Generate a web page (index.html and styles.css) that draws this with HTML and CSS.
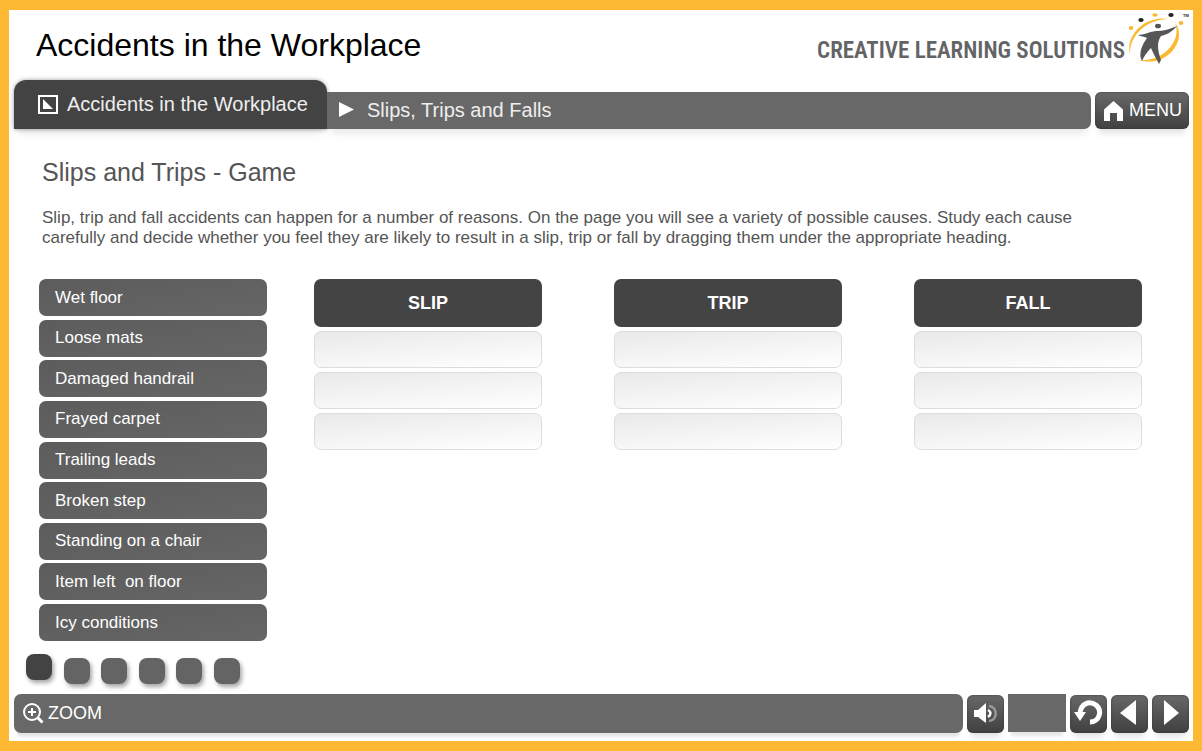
FILE: index.html
```html
<!DOCTYPE html>
<html lang="en">
<head>
    <meta charset="UTF-8">
    <meta name="viewport" content="width=device-width, initial-scale=1.0">
    <title>Accidents in the Workplace</title>
    <link rel="stylesheet" href="styles.css">
</head>
<body>
    <header class="header">
        <h1>Accidents in the Workplace</h1>
        <div class="logo">
            <span class="logo-text">CREATIVE LEARNING SOLUTIONS</span>
            <svg class="logo-mark" viewBox="0 0 62 54" aria-hidden="true">
                <path d="M1 42 C-4 22 16 2 40 6 C18 6 0 22 1 42Z" fill="#fbb92e"/>
                <path d="M46 10 C59 25 39 56 10 47 C36 49 53 26 46 10Z" fill="#fbb92e"/>
                <ellipse cx="29" cy="13" rx="3" ry="2.300" fill="#555657"/>
                <path d="M9 22 C15 22 19 19 27 18 C35 18 41 16 48 13 C43 19 37 22 32 23 C28 29 28 36 32 47 L30 51 C27 45 24 40 22 35 C18 39 15 43 13 48 C9 41 13 32 18 25 C15 23 12 24 9 22Z" fill="#555657"/>
                <ellipse cx="2" cy="15" rx="2.300" ry="2" fill="#fbb92e"/>
                <ellipse cx="12" cy="7" rx="2.700" ry="2" fill="#222"/>
                <ellipse cx="26" cy="2" rx="2.700" ry="1.800" fill="#fbb92e"/>
                <ellipse cx="42" cy="2" rx="2.700" ry="2" fill="#222"/>
                <ellipse cx="52" cy="10" rx="2.300" ry="2" fill="#fbb92e"/>
                <text x="54" y="4" class="tm">TM</text>
            </svg>
        </div>
    </header>

    <nav class="nav">
        <a class="tab" href="#">
            <svg width="20" height="20" viewBox="0 0 20 20" aria-hidden="true">
                <rect x="1" y="1" width="18" height="17" fill="none" stroke="#fff" stroke-width="2"/>
                <path d="M5 4V14H15Z" fill="#fff"/>
            </svg>
            Accidents in the Workplace
        </a>
        <div class="crumb">
            <svg width="15" height="17" viewBox="0 0 15 17" aria-hidden="true">
                <path d="M0 0L15 7.500L0 15Z" fill="#fff"/>
            </svg>
            Slips, Trips and Falls
        </div>
        <button class="btn menu" type="button">
            <svg width="19" height="20" viewBox="0 0 19 20" aria-hidden="true">
                <path d="M9.500 0L19 8.500V20H13V12H6V20H0V8.500Z" fill="#fff"/>
            </svg>
            MENU
        </button>
    </nav>

    <main class="content">
        <h2>Slips and Trips - Game</h2>
        <p>Slip, trip and fall accidents can happen for a number of reasons. On the page you will see a variety of possible causes. Study each cause carefully and decide whether you feel they are likely to result in a slip, trip or fall by dragging them under the appropriate heading.</p>

        <div class="game">
            <div class="causes">
                <button class="cause" type="button" draggable="true">Wet floor</button>
                <button class="cause" type="button" draggable="true">Loose mats</button>
                <button class="cause" type="button" draggable="true">Damaged handrail</button>
                <button class="cause" type="button" draggable="true">Frayed carpet</button>
                <button class="cause" type="button" draggable="true">Trailing leads</button>
                <button class="cause" type="button" draggable="true">Broken step</button>
                <button class="cause" type="button" draggable="true">Standing on a chair</button>
                <button class="cause" type="button" draggable="true">Item left&nbsp; on floor</button>
                <button class="cause" type="button" draggable="true">Icy conditions</button>
            </div>
            <div class="columns">
                <section class="column">
                    <h3>SLIP</h3>
                    <div class="slot"></div>
                    <div class="slot"></div>
                    <div class="slot"></div>
                </section>
                <section class="column">
                    <h3>TRIP</h3>
                    <div class="slot"></div>
                    <div class="slot"></div>
                    <div class="slot"></div>
                </section>
                <section class="column">
                    <h3>FALL</h3>
                    <div class="slot"></div>
                    <div class="slot"></div>
                    <div class="slot"></div>
                </section>
            </div>
        </div>
    </main>

    <div class="pages">
        <button class="page current" type="button" aria-label="Page 1"></button>
        <button class="page" type="button" aria-label="Page 2"></button>
        <button class="page" type="button" aria-label="Page 3"></button>
        <button class="page" type="button" aria-label="Page 4"></button>
        <button class="page" type="button" aria-label="Page 5"></button>
        <button class="page" type="button" aria-label="Page 6"></button>
    </div>

    <footer class="footer">
        <div class="footer-bar">
            <button class="zoom" type="button">
                <svg width="21" height="21" viewBox="0 0 21 21" fill="none" stroke="#fff" aria-hidden="true">
                    <circle cx="9" cy="9" r="8" stroke-width="2"/>
                    <path d="M9 5V13M5 9H13" stroke-width="2"/>
                    <path d="M15 15L19.500 19.500" stroke-width="3"/>
                </svg>
                ZOOM
            </button>
        </div>
        <button class="btn square" type="button" aria-label="Sound">
            <svg width="37" height="38" viewBox="0 0 37 38" aria-hidden="true">
                <path d="M7 15H11L19 8V28L11 22H7Z" fill="#fff"/>
                <path d="M21 15Q26 18 21 22" fill="none" stroke="#fff" stroke-width="2.500"/>
                <path d="M22 11C31 12 31 25 22 26" fill="none" stroke="#999" stroke-width="2.500"/>
            </svg>
        </button>
        <div class="status"></div>
        <button class="btn square" type="button" aria-label="Replay">
            <svg width="37" height="38" viewBox="0 0 37 38" aria-hidden="true">
                <path d="M10 18C11 9 19 5 26 10C33 16 29 27 20 27" fill="none" stroke="#fff" stroke-width="5"/>
                <path d="M4 17H16L10 26Z" fill="#fff"/>
            </svg>
        </button>
        <button class="btn square" type="button" aria-label="Previous">
            <svg width="37" height="38" viewBox="0 0 37 38" aria-hidden="true">
                <path d="M25 5V30L9 18Z" fill="#fff"/>
            </svg>
        </button>
        <button class="btn square" type="button" aria-label="Next">
            <svg width="37" height="38" viewBox="0 0 37 38" aria-hidden="true">
                <path d="M12 5V30L27 18Z" fill="#fff"/>
            </svg>
        </button>
    </footer>
</body>
</html>
```
FILE: styles.css
```css
* {
    box-sizing: border-box;
}

body {
    display: flex;
    flex-direction: column;
    min-height: 100vh;
    margin: 0;
    border: solid #fdb933;
    border-width: 10px 9px;
    background: #fff;
    font-family: "Liberation Sans", Arial, sans-serif;
    color: #555;
}

h1, h2, h3, p {
    margin: 0;
    font-weight: normal;
}

button {
    padding: 0;
    border: none;
    font: inherit;
    color: #fff;
    cursor: pointer;
}

svg {
    display: block;
    flex: none;
}

/* header */
.header {
    display: flex;
    justify-content: space-between;
    align-items: flex-start;
    height: 70px;
    padding: 3px 2px 0 27px;
}

h1 {
    padding-top: 13px;
    font-size: 32px;
    line-height: 38px;
    color: #000;
}

.logo {
    display: flex;
    gap: 4px;
}

.logo-text {
    padding-top: 24px;
    font-family: "Roboto Condensed", Roboto, sans-serif;
    font-size: 23px;
    font-weight: 600;
    line-height: 28px;
    color: #636466;
}

.logo-mark {
    width: 62px;
    height: 54px;
}

.tm {
    font-size: 4px;
    font-weight: bold;
    fill: #222;
}

/* navigation */
.nav {
    display: flex;
    align-items: flex-end;
    padding: 0 4px 0 5px;
}

.tab {
    display: flex;
    align-items: center;
    gap: 9px;
    width: 313px;
    height: 49px;
    padding-left: 24px;
    border-radius: 12px 12px 0 0;
    background: #434343;
    box-shadow: 0 0 4px rgba(0, 0, 0, 0.4), 0 8px 8px -4px rgba(0, 0, 0, 0.1);
    color: #eee;
    font-size: 20px;
    text-decoration: none;
}

.crumb {
    display: flex;
    flex: 1;
    align-items: center;
    gap: 13px;
    height: 37px;
    margin-right: 4px;
    padding-left: 12px;
    border-radius: 0 7px 7px 0;
    background: #686868;
    box-shadow: 0 8px 8px -4px rgba(0, 0, 0, 0.1);
    color: #eee;
    font-size: 20px;
}

.btn {
    border-radius: 6px;
    background: linear-gradient(#686868, #404040);
    box-shadow: inset 0 0 2px #333, 0 8px 6px -4px rgba(0, 0, 0, 0.12);
}

.menu {
    display: flex;
    align-items: center;
    gap: 6px;
    width: 94px;
    height: 37px;
    padding-left: 9px;
    font-size: 18px;
}

/* content */
.content {
    flex: 1;
    padding: 28px 51px 0 33px;
}

h2 {
    font-size: 25px;
    line-height: 30px;
}

.content p {
    margin-top: 21px;
    padding-right: 30px;
    font-size: 17px;
    line-height: 20px;
}

.game {
    display: flex;
    align-items: flex-start;
    gap: 47px;
    margin: 31px 0 0 -3px;
}

.causes {
    display: flex;
    flex-direction: column;
    justify-content: space-between;
    width: 228px;
    height: 362px;
}

.cause {
    height: 37px;
    padding-left: 16px;
    border-radius: 7px;
    background: linear-gradient(170deg, #5c5c5c, #666);
    font-size: 17px;
    text-align: left;
}

.columns {
    display: grid;
    flex: 1;
    grid-template-columns: repeat(3, 228px);
    justify-content: space-between;
}

.column {
    display: grid;
    gap: 4px;
}

h3 {
    border-radius: 7px;
    background: #444;
    color: #fff;
    font-size: 18px;
    font-weight: bold;
    line-height: 48px;
    text-align: center;
}

.slot {
    height: 37px;
    border: 1px solid #ddd;
    border-radius: 7px;
    background: linear-gradient(175deg, #e9e9e9, #fff);
}

/* page squares */
.pages {
    display: flex;
    justify-content: space-between;
    align-items: flex-end;
    width: 248px;
    height: 43px;
    padding: 0 17px 10px;
}

.page {
    width: 26px;
    height: 26px;
    border-radius: 8px;
    background: #646464;
    box-shadow: 2px 3px 4px rgba(0, 0, 0, 0.35);
}

.page.current {
    margin-bottom: 4px;
    background: #434343;
}

/* footer */
.footer {
    display: flex;
    gap: 4px;
    padding: 0 4px 8px 5px;
}

.footer-bar {
    display: flex;
    flex: 1;
    height: 39px;
    padding-left: 9px;
    border-radius: 7px;
    background: #686868;
    box-shadow: 0 7px 3px -3px rgba(0, 0, 0, 0.1);
}

.zoom {
    display: flex;
    align-items: center;
    gap: 4px;
    background: none;
    font-size: 18px;
}

.square {
    width: 37px;
    height: 38px;
    margin-top: 1px;
}

.status {
    width: 58px;
    height: 38px;
    background: #686868;
    box-shadow: 0 7px 3px -3px rgba(0, 0, 0, 0.1);
}
```
